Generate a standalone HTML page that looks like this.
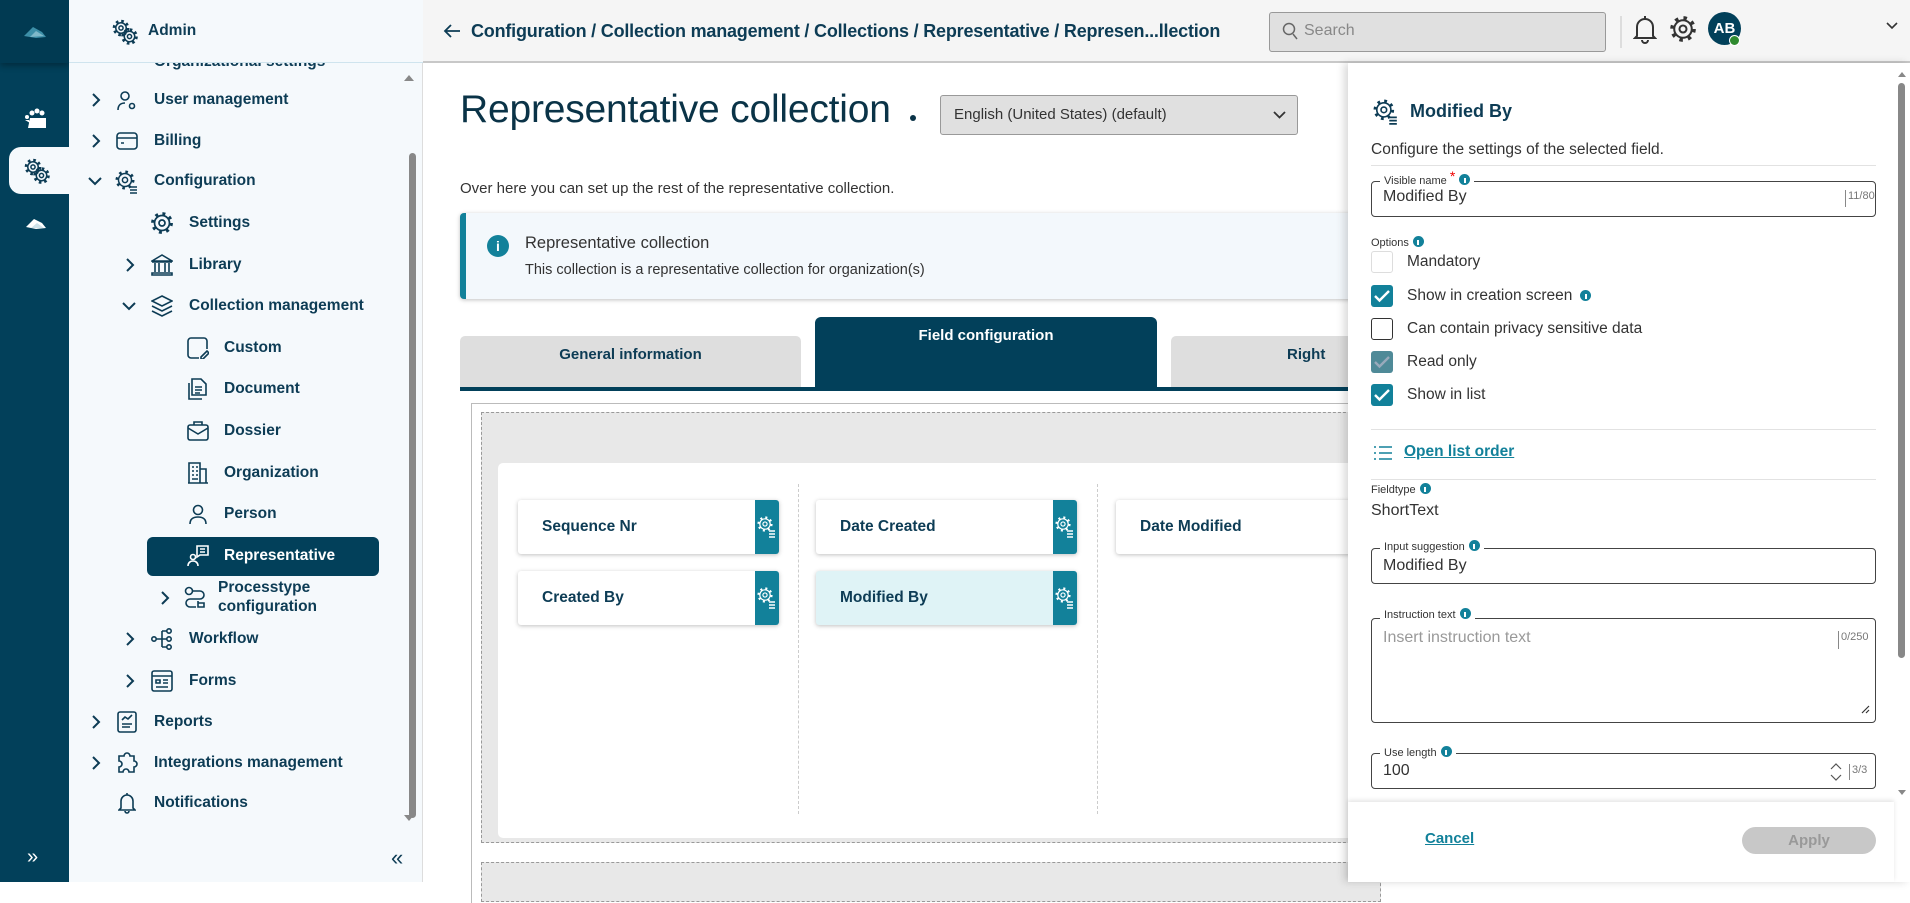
<!DOCTYPE html>
<html><head><meta charset="utf-8"><style>
*{box-sizing:border-box;margin:0;padding:0}
body{width:1910px;height:882px;overflow:hidden;font-family:"Liberation Sans",sans-serif;background:#fff;position:relative;color:#0d3c55}
.a{position:absolute}
.rail{left:0;top:0;width:69px;height:882px;background:#02405a}
.nav{left:69px;top:0;width:354px;height:882px;background:#f5f9fc;border-right:1px solid #ddd}
.ni{position:absolute;font-size:15.5px;font-weight:bold;color:#0d3c55;white-space:nowrap;transform:translateY(-50%)}
.chev{position:absolute;transform:translateY(-50%)}
svg{display:block}
.top{left:423px;top:0;width:1487px;height:63px;background:#f5f5f5;border-bottom:2px solid #c8c8c8}
.card{position:absolute;width:261px;height:54px;background:#fff;box-shadow:0 1px 4px rgba(0,0,0,.25);border-radius:3px;overflow:hidden}
.card span{position:absolute;left:24px;top:50%;transform:translateY(-50%);font-size:15.5px;font-weight:bold;color:#0d3c55}
.card i{position:absolute;right:0;top:0;width:24px;height:54px;background:#12819a}
.card i svg{position:absolute;left:2px;top:15px}
.panel{left:1348px;top:63px;width:562px;height:819px;background:#fff;box-shadow:-4px 0 8px rgba(0,0,0,.15)}
.lbl{position:absolute;font-size:11px;color:#333;background:#fff;padding:0 4px;white-space:nowrap}
.fld{position:absolute;border:1.5px solid #444;border-radius:4px;left:1371px;width:505px}
.inf{display:inline-block;width:11px;height:11px;border-radius:50%;background:#12819a;vertical-align:-1px;margin-left:4px;position:relative}
.inf:after{content:"";position:absolute;left:4.5px;top:4px;width:2px;height:5px;background:#fff}
.cb{position:absolute;left:1371px;width:22px;height:22px;border-radius:3px;transform:translateY(-50%)}
.cbt{position:absolute;left:1407px;font-size:15.5px;color:#333;transform:translateY(-50%);white-space:nowrap}
.on{background:#12819a}
.off{border:1.5px solid #333;background:#fff}
.hr{position:absolute;left:1371px;width:505px;height:1px;background:#e2e2e2}
</style></head><body>
<svg width="0" height="0" style="position:absolute"><defs>
<g id="gr"><circle cx="0" cy="0" r="7" fill="none" stroke-width="3.5" stroke-dasharray="2.6 2.9"/><circle cx="0" cy="0" r="5.5" fill="none" stroke-width="1.6"/><circle cx="0" cy="0" r="2.2" fill="none" stroke-width="1.6"/></g>
<g id="gs"><circle cx="0" cy="0" r="8" fill="none" stroke-width="3" stroke-dasharray="2.5 3.8"/><circle cx="0" cy="0" r="6.5" fill="none" stroke-width="1.5"/><circle cx="0" cy="0" r="2.6" fill="none" stroke-width="1.5"/></g>
</defs></svg>

<!-- rail -->
<div class="a rail"></div>
<div class="a" style="left:0;top:0;width:69px;height:63px;background:#013a52;box-shadow:0 3px 6px rgba(0,0,0,.3)"></div>
<svg class="a" style="left:22px;top:24px" width="26" height="16" viewBox="0 0 26 16"><path d="M2 12 L11 3 L20 8 L24 13 L14 14 Z" fill="#3d8fa8"/><path d="M8 13 L14 7 L22 12 Z" fill="#7fb8c9"/></svg>
<svg class="a" style="left:24px;top:108px" width="24" height="22" viewBox="0 0 24 22"><circle cx="8" cy="5" r="2.5" fill="#fff"/><circle cx="13" cy="3" r="2.5" fill="#fff"/><circle cx="18" cy="5" r="2.5" fill="#fff"/><circle cx="3" cy="9" r="2" fill="#fff"/><path d="M6 10h16v10H4z M1 12h4l1 3z" fill="#fff"/></svg>
<div class="a" style="left:9px;top:147px;width:60px;height:47px;background:#f5f9fc;border-radius:12px 0 0 12px"></div>
<svg class="a" style="left:24px;top:158px" width="26" height="26" viewBox="0 0 26 26" stroke="#0d3c55"><use href="#gr" transform="translate(9 9) scale(.95)"/><use href="#gr" transform="translate(17.5 17.5) scale(.95)"/></svg>
<svg class="a" style="left:24px;top:216px" width="24" height="14" viewBox="0 0 24 14"><path d="M2 11 L10 3 L18 7 L22 12 L12 13 Z" fill="#fff"/><path d="M7 12 L13 7 L20 12Z" fill="#cfe3ea"/></svg>
<div class="a" style="left:27px;top:846px;color:#fff;font-size:20px">»</div>

<!-- nav -->
<div class="a nav"></div>
<div class="ni" style="left:154px;top:62px;color:#0d3c55">Organizational settings</div>
<div class="a" style="left:69px;top:0;width:354px;height:63px;background:#f5f9fc;border-bottom:1px solid #cfe4ee;z-index:2"></div>
<svg class="a" style="left:112px;top:19px;z-index:3" width="26" height="26" viewBox="0 0 26 26" stroke="#0d3c55"><use href="#gr" transform="translate(9 9) scale(.95)"/><use href="#gr" transform="translate(17.5 17.5) scale(.95)"/></svg>
<div class="ni" style="left:148px;top:31px;z-index:3">Admin</div>
<div class="a" style="left:404px;top:70px;width:0;height:0;border:5px solid transparent;border-bottom:6px solid #888"></div>
<div class="a" style="left:409px;top:153px;width:7px;height:665px;background:#888;border-radius:4px"></div>
<div class="a" style="left:404px;top:815px;width:0;height:0;border:5px solid transparent;border-top:6px solid #888"></div>

<svg class="chev" style="left:91px;top:100px" width="10" height="14" viewBox="0 0 10 14"><path d="M2 1l6 6-6 6" stroke="#0d3c55" stroke-width="2" fill="none"/></svg>
<svg class="a" style="left:116px;top:90px" width="22" height="22" viewBox="0 0 22 22" fill="none" stroke="#0d3c55" stroke-width="1.6"><circle cx="9" cy="6" r="4"/><path d="M2 20c0-5 3-7 7-7"/><circle cx="16" cy="16" r="2.5"/></svg>
<div class="ni" style="left:154px;top:100px">User management</div>
<svg class="chev" style="left:91px;top:141px" width="10" height="14" viewBox="0 0 10 14"><path d="M2 1l6 6-6 6" stroke="#0d3c55" stroke-width="2" fill="none"/></svg>
<svg class="a" style="left:116px;top:132px" width="22" height="18" viewBox="0 0 22 18" fill="none" stroke="#0d3c55" stroke-width="1.6"><rect x="1" y="1" width="20" height="16" rx="3"/><path d="M1 6h20M5 11h3"/></svg>
<div class="ni" style="left:154px;top:141px">Billing</div>
<svg class="chev" style="left:88px;top:181px" width="14" height="10" viewBox="0 0 14 10"><path d="M1 2l6 6 6-6" stroke="#0d3c55" stroke-width="2" fill="none"/></svg>
<svg class="a" style="left:115px;top:170px" width="24" height="24" viewBox="0 0 24 24" fill="none" stroke="#0d3c55"><use href="#gs" transform="translate(10 10)"/><path d="M15 17h7M15 20h7M15 23h7" stroke-width="1.6" stroke="#0d3c55"/></svg>
<div class="ni" style="left:154px;top:181px">Configuration</div>
<svg class="a" style="left:151px;top:212px" width="22" height="22" viewBox="0 0 22 22" stroke="#0d3c55"><use href="#gs" transform="translate(11 11) scale(1.15)"/></svg>
<div class="ni" style="left:189px;top:223px">Settings</div>
<svg class="chev" style="left:125px;top:265px" width="10" height="14" viewBox="0 0 10 14"><path d="M2 1l6 6-6 6" stroke="#0d3c55" stroke-width="2" fill="none"/></svg>
<svg class="a" style="left:151px;top:254px" width="22" height="22" viewBox="0 0 22 22" fill="none" stroke="#0d3c55" stroke-width="1.6"><path d="M1 7L11 1l10 6zM1 8h20M4 9v9M8 9v9M14 9v9M18 9v9M1 19h20v2H1z"/></svg>
<div class="ni" style="left:189px;top:265px">Library</div>
<svg class="chev" style="left:122px;top:306px" width="14" height="10" viewBox="0 0 14 10"><path d="M1 2l6 6 6-6" stroke="#0d3c55" stroke-width="2" fill="none"/></svg>
<svg class="a" style="left:151px;top:295px" width="22" height="22" viewBox="0 0 22 22" fill="none" stroke="#0d3c55" stroke-width="1.6"><path d="M11 1l10 5-10 5L1 6zM1 11l10 5 10-5M1 16l10 5 10-5"/></svg>
<div class="ni" style="left:189px;top:306px">Collection management</div>
<svg class="a" style="left:187px;top:337px" width="22" height="22" viewBox="0 0 22 22" fill="none" stroke="#0d3c55" stroke-width="1.6"><path d="M12 21H4a3 3 0 0 1-3-3V4a3 3 0 0 1 3-3h13a3 3 0 0 1 3 3v8"/><path d="M14 20l6-6 2 2-6 6h-2z"/></svg>
<div class="ni" style="left:224px;top:348px">Custom</div>
<svg class="a" style="left:187px;top:378px" width="20" height="22" viewBox="0 0 20 22" fill="none" stroke="#0d3c55" stroke-width="1.6"><path d="M5 1h9l5 5v11H5zM2 5v16h13M8 9h7M8 12h7M8 15h5"/></svg>
<div class="ni" style="left:224px;top:389px">Document</div>
<svg class="a" style="left:187px;top:420px" width="22" height="22" viewBox="0 0 22 22" fill="none" stroke="#0d3c55" stroke-width="1.6"><rect x="1" y="5" width="20" height="15" rx="2"/><path d="M7 5V2h8v3M1 8l10 6 10-6"/></svg>
<div class="ni" style="left:224px;top:431px">Dossier</div>
<svg class="a" style="left:187px;top:462px" width="22" height="22" viewBox="0 0 22 22" fill="none" stroke="#0d3c55" stroke-width="1.6"><path d="M2 21V1h11v20M13 7h6v14M1 21h20M5 5h2M9 5h2M5 9h2M9 9h2M5 13h2M9 13h2M5 17h6"/></svg>
<div class="ni" style="left:224px;top:473px">Organization</div>
<svg class="a" style="left:189px;top:504px" width="18" height="20" viewBox="0 0 18 20" fill="none" stroke="#0d3c55" stroke-width="1.6"><circle cx="9" cy="6" r="4.5"/><path d="M1 20c0-5 3-7 8-7s8 2 8 7"/></svg>
<div class="ni" style="left:224px;top:514px">Person</div>
<div class="a" style="left:147px;top:537px;width:232px;height:39px;background:#02405a;border-radius:6px"></div>
<svg class="a" style="left:187px;top:545px" width="22" height="22" viewBox="0 0 22 22" fill="none" stroke="#fff" stroke-width="1.6"><circle cx="6" cy="12" r="2.5"/><path d="M1 21c0-3 2-5 5-5s5 2 5 5M10 1h11v9h-8l-3 2zM13 4h5M13 7h5"/></svg>
<div class="ni" style="left:224px;top:556px;color:#fff">Representative</div>
<svg class="chev" style="left:160px;top:598px" width="10" height="14" viewBox="0 0 10 14"><path d="M2 1l6 6-6 6" stroke="#0d3c55" stroke-width="2" fill="none"/></svg>
<svg class="a" style="left:184px;top:586px" width="22" height="24" viewBox="0 0 22 24" fill="none" stroke="#0d3c55" stroke-width="1.6"><circle cx="5" cy="5" r="3.5"/><path d="M9 5h7a4 4 0 0 1 0 8H6a4 4 0 0 0 0 8h6M14 17h6v4h-6v-6"/></svg>
<div class="ni" style="left:218px;top:588px">Processtype</div>
<div class="ni" style="left:218px;top:607px">configuration</div>
<svg class="chev" style="left:125px;top:639px" width="10" height="14" viewBox="0 0 10 14"><path d="M2 1l6 6-6 6" stroke="#0d3c55" stroke-width="2" fill="none"/></svg>
<svg class="a" style="left:151px;top:628px" width="22" height="22" viewBox="0 0 22 22" fill="none" stroke="#0d3c55" stroke-width="1.6"><circle cx="3" cy="11" r="2.2"/><circle cx="18" cy="3" r="2.2"/><circle cx="18" cy="11" r="2.2"/><circle cx="18" cy="19" r="2.2"/><path d="M5 11h11M11 3v16M11 3h5M11 19h5"/></svg>
<div class="ni" style="left:189px;top:639px">Workflow</div>
<svg class="chev" style="left:125px;top:681px" width="10" height="14" viewBox="0 0 10 14"><path d="M2 1l6 6-6 6" stroke="#0d3c55" stroke-width="2" fill="none"/></svg>
<svg class="a" style="left:151px;top:670px" width="22" height="22" viewBox="0 0 22 22" fill="none" stroke="#0d3c55" stroke-width="1.6"><rect x="1" y="1" width="20" height="20" rx="2"/><path d="M1 6h20M5 10h4v3H5zM12 10h5M12 13h5M5 17h12"/></svg>
<div class="ni" style="left:189px;top:681px">Forms</div>
<svg class="chev" style="left:91px;top:722px" width="10" height="14" viewBox="0 0 10 14"><path d="M2 1l6 6-6 6" stroke="#0d3c55" stroke-width="2" fill="none"/></svg>
<svg class="a" style="left:117px;top:711px" width="20" height="22" viewBox="0 0 20 22" fill="none" stroke="#0d3c55" stroke-width="1.6"><rect x="1" y="1" width="18" height="20" rx="2"/><path d="M5 9l3-3 3 2 4-4M5 13h10M5 16h8"/></svg>
<div class="ni" style="left:154px;top:722px">Reports</div>
<svg class="chev" style="left:91px;top:763px" width="10" height="14" viewBox="0 0 10 14"><path d="M2 1l6 6-6 6" stroke="#0d3c55" stroke-width="2" fill="none"/></svg>
<svg class="a" style="left:116px;top:752px" width="22" height="22" viewBox="0 0 22 22" fill="none" stroke="#0d3c55" stroke-width="1.6"><path d="M8 4a3 3 0 0 1 6 0h4v5a3 3 0 0 1 0 6v5h-5a3 3 0 0 0-6 0H3v-5a3 3 0 0 0 0-6V4z"/></svg>
<div class="ni" style="left:154px;top:763px">Integrations management</div>
<svg class="a" style="left:118px;top:792px" width="18" height="22" viewBox="0 0 18 22" fill="none" stroke="#0d3c55" stroke-width="1.6"><path d="M9 1v2M3 16V9a6 6 0 0 1 12 0v7l2 2H1zM7 19a2 2 0 0 0 4 0"/></svg>
<div class="ni" style="left:154px;top:803px">Notifications</div>
<div class="a" style="left:391px;top:845px;font-size:22px;color:#0d3c55">«</div>

<!-- top bar -->
<div class="a top"></div>
<svg class="a" style="left:443px;top:23px" width="18" height="16" viewBox="0 0 18 16" fill="none" stroke="#0d3c55" stroke-width="1.8"><path d="M17 8H2M8 2L2 8l6 6"/></svg>
<div class="a" style="left:471px;top:21px;font-size:18px;font-weight:bold;color:#0d3c55;white-space:nowrap;letter-spacing:-0.2px">Configuration / Collection management / Collections / Representative / Represen...llection</div>
<div class="a" style="left:1269px;top:12px;width:337px;height:40px;background:#e0e0e0;border:1.5px solid #999;border-radius:3px"></div>
<svg class="a" style="left:1282px;top:22px" width="16" height="18" viewBox="0 0 16 18" fill="none" stroke="#666" stroke-width="1.5"><circle cx="7" cy="7" r="5.5"/><path d="M11 12l4 5"/></svg>
<div class="a" style="left:1304px;top:22px;font-size:16px;color:#888">Search</div>
<div class="a" style="left:1620px;top:16px;width:2px;height:32px;background:#ddd"></div>
<svg class="a" style="left:1633px;top:14px" width="24" height="30" viewBox="0 0 24 30" fill="none" stroke="#333" stroke-width="2"><path d="M12 2v3M4 22V13a8 8 0 0 1 16 0v9l2 2H2zM9 26a3 3 0 0 0 6 0"/></svg>
<svg class="a" style="left:1670px;top:16px" width="26" height="26" viewBox="0 0 26 26" stroke="#333"><use href="#gs" transform="translate(13 13) scale(1.35)"/></svg>
<div class="a" style="left:1708px;top:12px;width:33px;height:33px;border-radius:50%;background:#02405a;color:#fff;font-size:15px;font-weight:bold;text-align:center;line-height:33px">AB</div>
<div class="a" style="left:1729px;top:35px;width:11px;height:11px;border-radius:50%;background:#2f8a2f;border:1.5px solid #fff"></div>
<svg class="a" style="left:1886px;top:22px" width="12" height="8" viewBox="0 0 12 8"><path d="M1 1l5 5 5-5" stroke="#333" stroke-width="1.6" fill="none"/></svg>

<!-- main -->
<div class="a" style="left:460px;top:88px;font-size:39px;color:#0a3347;white-space:nowrap;letter-spacing:-0.2px">Representative collection</div>
<div class="a" style="left:910px;top:115px;width:6px;height:6px;border-radius:50%;background:#0a3347"></div>
<div class="a" style="left:940px;top:95px;width:358px;height:40px;background:#e0e0e0;border:1.5px solid #999;border-radius:3px"></div>
<div class="a" style="left:954px;top:106px;font-size:15px;color:#333">English (United States) (default)</div>
<svg class="a" style="left:1273px;top:111px" width="13" height="8" viewBox="0 0 13 8"><path d="M1 1l5.5 5.5L12 1" stroke="#333" stroke-width="1.8" fill="none"/></svg>
<div class="a" style="left:460px;top:180px;font-size:15px;color:#333">Over here you can set up the rest of the representative collection.</div>
<div class="a" style="left:460px;top:213px;width:900px;height:86px;background:#f3f8fc;border-left:6px solid #12819a;border-radius:4px;box-shadow:0 1px 4px rgba(0,0,0,.25)"></div>
<div class="a" style="left:487px;top:235px;width:22px;height:22px;border-radius:50%;background:#12819a;color:#fff;font-size:14px;font-weight:bold;text-align:center;line-height:22px">i</div>
<div class="a" style="left:525px;top:234px;font-size:16.5px;color:#333">Representative collection</div>
<div class="a" style="left:525px;top:262px;font-size:14.5px;color:#333">This collection is a representative collection for organization(s)</div>

<div class="a" style="left:460px;top:336px;width:341px;height:51px;background:#dedede;border-radius:5px 5px 0 0"></div>
<div class="a" style="left:460px;top:346px;width:341px;text-align:center;font-size:15px;font-weight:bold;color:#0d3c55">General information</div>
<div class="a" style="left:815px;top:317px;width:342px;height:70px;background:#02405a;border-radius:6px 6px 0 0"></div>
<div class="a" style="left:815px;top:327px;width:342px;text-align:center;font-size:15px;font-weight:bold;color:#fff">Field configuration</div>
<div class="a" style="left:1171px;top:336px;width:200px;height:51px;background:#dedede;border-radius:5px 5px 0 0"></div>
<div class="a" style="left:1287px;top:346px;font-size:15px;font-weight:bold;color:#0d3c55">Right</div>
<div class="a" style="left:460px;top:387px;width:900px;height:4px;background:#02405a"></div>
<div class="a" style="left:471px;top:403px;width:900px;height:500px;border:1px solid #bbb;border-right:none;border-bottom:none"></div>
<div class="a" style="left:481px;top:412px;width:900px;height:431px;background:#e8e8e8;border:1px dashed #999"></div>
<div class="a" style="left:498px;top:463px;width:900px;height:375px;background:#fff;border-radius:5px"></div>
<div class="a" style="left:798px;top:484px;height:330px;border-left:1px dashed #ccc"></div>
<div class="a" style="left:1097px;top:484px;height:330px;border-left:1px dashed #ccc"></div>
<div class="card" style="left:518px;top:500px"><span>Sequence Nr</span><i><svg width="20" height="24" viewBox="0 0 20 24" stroke="#fff"><use href="#gs" transform="translate(8 9) scale(.8)"/><path d="M12 16h6M12 19h6M12 22h6" stroke-width="1.4"/></svg></i></div>
<div class="card" style="left:816px;top:500px"><span>Date Created</span><i><svg width="20" height="24" viewBox="0 0 20 24" stroke="#fff"><use href="#gs" transform="translate(8 9) scale(.8)"/><path d="M12 16h6M12 19h6M12 22h6" stroke-width="1.4"/></svg></i></div>
<div class="card" style="left:1116px;top:500px"><span>Date Modified</span></div>
<div class="card" style="left:518px;top:571px"><span>Created By</span><i><svg width="20" height="24" viewBox="0 0 20 24" stroke="#fff"><use href="#gs" transform="translate(8 9) scale(.8)"/><path d="M12 16h6M12 19h6M12 22h6" stroke-width="1.4"/></svg></i></div>
<div class="card" style="left:816px;top:571px;background:#dff3f6"><span>Modified By</span><i><svg width="20" height="24" viewBox="0 0 20 24" stroke="#fff"><use href="#gs" transform="translate(8 9) scale(.8)"/><path d="M12 16h6M12 19h6M12 22h6" stroke-width="1.4"/></svg></i></div>
<div class="a" style="left:481px;top:862px;width:900px;height:40px;background:#e8e8e8;border:1px dashed #999"></div>

<!-- panel -->
<div class="a panel"></div>
<div class="a" style="left:1898px;top:68px;width:0;height:0;border:4px solid transparent;border-bottom:5px solid #888"></div>
<div class="a" style="left:1898px;top:83px;width:7px;height:575px;background:#888;border-radius:4px"></div>
<div class="a" style="left:1898px;top:790px;width:0;height:0;border:4px solid transparent;border-top:5px solid #888"></div>
<svg class="a" style="left:1373px;top:99px" width="26" height="26" viewBox="0 0 24 24" stroke="#0d3c55"><use href="#gs" transform="translate(10 10)"/><path d="M15 17h7M15 20h7M15 23h7" stroke-width="1.6"/></svg>
<div class="a" style="left:1410px;top:101px;font-size:18px;font-weight:bold;color:#0d3c55">Modified By</div>
<div class="a" style="left:1371px;top:141px;font-size:15.5px;color:#333">Configure the settings of the selected field.</div>
<div class="hr" style="top:165px"></div>
<div class="fld" style="top:181px;height:36px"></div>
<div class="lbl" style="left:1380px;top:171px">Visible name <span style="color:#e00;font-size:14px;position:relative;top:-3px">*</span><span class="inf"></span></div>
<div class="a" style="left:1383px;top:188px;font-size:16px;color:#333">Modified By</div>
<div class="a" style="left:1845px;top:190px;height:17px;border-left:1px solid #888;font-size:11px;color:#777;padding-left:2px">11/80</div>
<div class="a" style="left:1371px;top:236px;font-size:11px;color:#333">Options<span class="inf"></span></div>
<div class="cb" style="top:262px;border:1px solid #ddd"></div><div class="cbt" style="top:262px">Mandatory</div>
<div class="cb on" style="top:296px"><svg width="22" height="22"><path d="M4 11l4.5 4.5L18 6" stroke="#fff" stroke-width="2.4" fill="none"/></svg></div><div class="cbt" style="top:296px">Show in creation screen<span class="inf" style="margin-left:8px"></span></div>
<div class="cb off" style="top:329px"></div><div class="cbt" style="top:329px">Can contain privacy sensitive data</div>
<div class="cb" style="top:362px;background:#4f8a98"><svg width="22" height="22"><path d="M4 11l4.5 4.5L18 6" stroke="#9ab" stroke-width="2.4" fill="none"/></svg></div><div class="cbt" style="top:362px">Read only</div>
<div class="cb on" style="top:395px"><svg width="22" height="22"><path d="M4 11l4.5 4.5L18 6" stroke="#fff" stroke-width="2.4" fill="none"/></svg></div><div class="cbt" style="top:395px">Show in list</div>
<div class="hr" style="top:429px"></div>
<svg class="a" style="left:1373px;top:445px" width="20" height="16" viewBox="0 0 20 16" stroke="#12819a" stroke-width="1.6"><path d="M1 2h2M6 2h13M1 8h2M6 8h13M1 14h2M6 14h13"/></svg>
<div class="a" style="left:1404px;top:443px;font-size:15.5px;font-weight:bold;color:#12819a;text-decoration:underline">Open list order</div>
<div class="hr" style="top:479px"></div>
<div class="a" style="left:1371px;top:483px;font-size:11px;color:#333">Fieldtype<span class="inf"></span></div>
<div class="a" style="left:1371px;top:502px;font-size:16px;color:#333">ShortText</div>
<div class="fld" style="top:548px;height:36px"></div>
<div class="lbl" style="left:1380px;top:540px">Input suggestion<span class="inf"></span></div>
<div class="a" style="left:1383px;top:557px;font-size:16px;color:#333">Modified By</div>
<div class="fld" style="top:618px;height:105px"></div>
<div class="lbl" style="left:1380px;top:608px">Instruction text<span class="inf"></span></div>
<div class="a" style="left:1383px;top:629px;font-size:16px;color:#999">Insert instruction text</div>
<div class="a" style="left:1838px;top:631px;height:18px;border-left:1px solid #888;font-size:11px;color:#777;padding-left:2px">0/250</div>
<svg class="a" style="left:1861px;top:705px" width="9" height="9"><path d="M1 8l7-7M5 8l3-3" stroke="#333" stroke-width="1.2"/></svg>
<div class="fld" style="top:753px;height:36px"></div>
<div class="lbl" style="left:1380px;top:746px">Use length<span class="inf"></span></div>
<div class="a" style="left:1383px;top:762px;font-size:16px;color:#333">100</div>
<svg class="a" style="left:1830px;top:762px" width="12" height="20" viewBox="0 0 12 20" fill="none" stroke="#555" stroke-width="1.2"><path d="M1 7l5-5 5 5M1 13l5 5 5-5"/></svg>
<div class="a" style="left:1849px;top:764px;height:16px;border-left:1px solid #888;font-size:11px;color:#777;padding-left:2px">3/3</div>
<div class="a" style="left:1348px;top:802px;width:546px;height:80px;background:#fff;box-shadow:0 -2px 4px rgba(0,0,0,.1)"></div>
<div class="a" style="left:1425px;top:830px;font-size:15px;font-weight:bold;color:#12819a;text-decoration:underline">Cancel</div>
<div class="a" style="left:1742px;top:827px;width:134px;height:27px;border-radius:14px;background:#c8c8c8;color:#999;font-size:15px;font-weight:bold;text-align:center;line-height:27px">Apply</div>
</body></html>
